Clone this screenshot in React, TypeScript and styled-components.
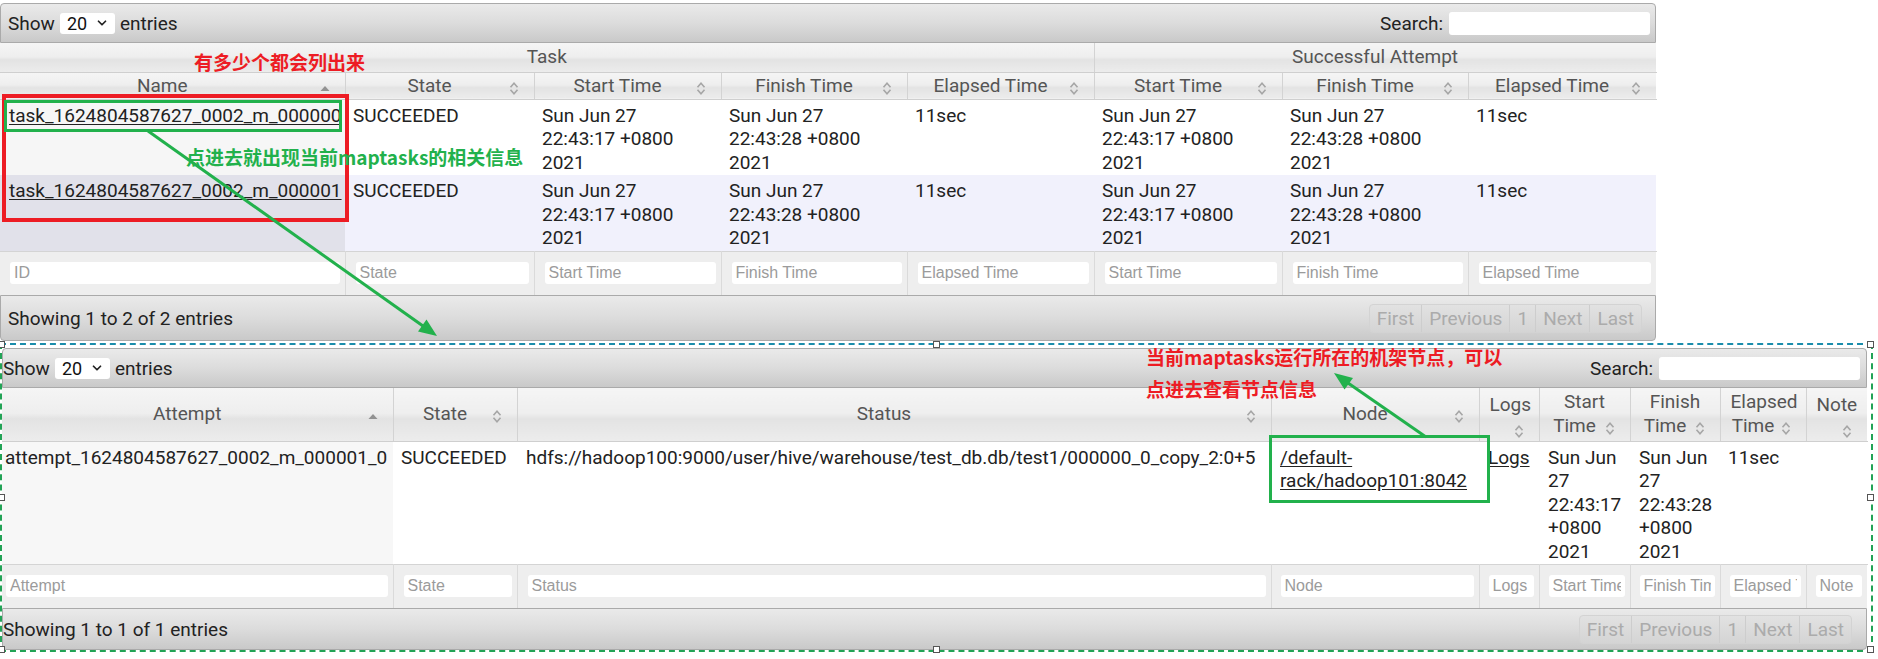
import React from 'react';
import styled, { createGlobalStyle } from 'styled-components';
import { ChevronDown } from 'lucide-react';

const GlobalStyle = createGlobalStyle`
  * { box-sizing: border-box; }
  html, body { margin: 0; padding: 0; background: #fff; }
  body {
    font-family: Roboto, "Liberation Sans", "Noto Sans CJK SC", sans-serif;
    font-size: 19px;
    color: #222;
    width: 1878px;
    height: 659px;
    overflow: hidden;
  }
`;

const Page = styled.div`
  position: relative;
  width: 1878px;
  height: 659px;
  padding-top: 3px;
`;

const Panel = styled.div<{ $width: number }>`
  width: ${(p) => p.$width}px;
`;

const Frame = styled.div`
  position: relative;
  margin-top: 2px;
  width: 1873px;
  height: 309px;
  padding-top: 3px;
  border: 2px dashed #22a356;
  border-top-color: #1a8cab;
`;

const Handle = styled.span<{ $x: number; $y: number }>`
  position: absolute;
  left: calc(${(p) => p.$x}% - 4px);
  top: calc(${(p) => p.$y}% - 4px);
  width: 7px;
  height: 7px;
  background: #fff;
  border: 1px solid #555;
`;

const Bar = styled.div<{ $padLeft: number; $padRight: number; $height: number; $top?: boolean }>`
  display: flex;
  align-items: center;
  justify-content: space-between;
  height: ${(p) => p.$height}px;
  padding: 0 ${(p) => p.$padRight}px 0 ${(p) => p.$padLeft}px;
  border: 1px solid #aaa;
  border-radius: ${(p) => (p.$top ? '4px 4px 0 0' : '0 0 4px 4px')};
  background: linear-gradient(#eaeaea 0%, #dcdcdc 50%, #c9c9c9 100%);
`;

const LengthBox = styled.label`
  display: flex;
  align-items: center;
  gap: 5px;
`;

const SelectWrap = styled.span`
  position: relative;
  display: inline-block;
`;

const Select = styled.select`
  appearance: none;
  width: 55px;
  height: 21px;
  padding: 0 0 0 7px;
  border: none;
  border-radius: 3px;
  background: #fff;
  font-family: Roboto, sans-serif;
  font-size: 18px;
  color: #111;
`;

const SelectArrow = styled.span`
  position: absolute;
  right: 6px;
  top: 4px;
  display: flex;
  pointer-events: none;
  color: #222;
`;

const SearchBox = styled.label`
  display: flex;
  align-items: center;
  gap: 6px;
`;

const SearchInput = styled.input`
  width: 201px;
  height: 23px;
  border: none;
  border-radius: 3px;
  background: #fff;
`;

const Table = styled.table<{ $width: number }>`
  width: ${(p) => p.$width}px;
  table-layout: fixed;
  border-collapse: collapse;
  border-spacing: 0;
`;

const HeadRow = styled.tr<{ $height: number }>`
  height: ${(p) => p.$height}px;
`;

const HeadCell = styled.th<{ $last?: boolean }>`
  padding: 0 10px;
  font-weight: 400;
  color: #555;
  line-height: 24px;
  text-align: center;
  vertical-align: middle;
  background: linear-gradient(#f5f5f5 0%, #eeeeee 48%, #e3e3e3 58%, #ececec 100%);
  border-right: 1px solid ${(p) => (p.$last ? 'transparent' : '#d3d3d3')};
  border-bottom: 1px solid #cfcfcf;
`;

const GroupCell = styled(HeadCell)`
  padding: 0;
`;

const SortIcon = styled.span`
  float: right;
  display: block;
  width: 10px;
  height: 15px;
  margin: 4px 5px 0 5px;
`;

const BodyRow = styled.tr<{ $height: number }>`
  height: ${(p) => p.$height}px;
`;

const BodyCell = styled.td<{ $bg: string; $padLeft?: number; $padRight?: number; $nowrap?: boolean }>`
  vertical-align: top;
  padding: 4px ${(p) => p.$padRight ?? 12}px 0 ${(p) => p.$padLeft ?? 8}px;
  line-height: 23.5px;
  background: ${(p) => p.$bg};
  white-space: ${(p) => (p.$nowrap ? 'nowrap' : 'normal')};
  overflow: visible;
`;

const CellLink = styled.a`
  color: #222;
  text-decoration: underline;
  text-underline-offset: 2px;
`;

const FilterCell = styled.td<{ $padLeft: number; $last?: boolean }>`
  height: 44px;
  padding: 0 5px 0 ${(p) => p.$padLeft}px;
  vertical-align: middle;
  background: #eeeeee;
  border-top: 1px solid #d4d4d4;
  border-right: 1px solid ${(p) => (p.$last ? 'transparent' : '#dadada')};
`;

const FilterInput = styled.input`
  display: block;
  width: 100%;
  height: 22px;
  padding: 0 4px;
  border: none;
  border-radius: 3px;
  background: #fff;
  font-family: "Liberation Sans", Arial, sans-serif;
  font-size: 16px;
  &::placeholder {
    color: #9b9b9b;
  }
`;

const Pager = styled.div`
  display: flex;
  height: 29px;
  border: 1px solid #d3d3d3;
  border-radius: 4px;
  background: linear-gradient(#e2e2e2, #d4d4d4);
  overflow: hidden;
`;

const PageBtn = styled.span`
  padding: 0 7px;
  line-height: 27px;
  color: #ababab;
  border-left: 1px solid #cdcdcd;
  &:first-child {
    border-left: none;
  }
`;

const Overlay = styled.svg`
  position: absolute;
  left: 0;
  top: 0;
  pointer-events: none;
`;

const MarkBox = styled.div<{ $color: string; $x: number; $y: number; $w: number; $h: number; $line: number }>`
  position: absolute;
  left: ${(p) => p.$x}px;
  top: ${(p) => p.$y}px;
  width: ${(p) => p.$w}px;
  height: ${(p) => p.$h}px;
  border: ${(p) => p.$line}px solid ${(p) => p.$color};
  pointer-events: none;
`;

const Note = styled.div<{ $color: string; $x: number; $y: number }>`
  position: absolute;
  left: ${(p) => p.$x}px;
  top: ${(p) => p.$y}px;
  font-family: "Noto Sans CJK SC", sans-serif;
  font-weight: 700;
  font-size: 19px;
  line-height: 1;
  color: ${(p) => p.$color};
  white-space: nowrap;
`;

const RED = '#ed1c24';
const GREEN = '#22b14c';

type Sort = 'asc' | 'both';
interface Col {
  label: string;
  width: number;
  sort: Sort;
  filter: string;
  filterPad: number;
}

const topCols: Col[] = [
  { label: 'Name', width: 345, sort: 'asc', filter: 'ID', filterPad: 10 },
  { label: 'State', width: 189, sort: 'both', filter: 'State', filterPad: 10 },
  { label: 'Start Time', width: 187, sort: 'both', filter: 'Start Time', filterPad: 10 },
  { label: 'Finish Time', width: 186, sort: 'both', filter: 'Finish Time', filterPad: 10 },
  { label: 'Elapsed Time', width: 187, sort: 'both', filter: 'Elapsed Time', filterPad: 10 },
  { label: 'Start Time', width: 188, sort: 'both', filter: 'Start Time', filterPad: 10 },
  { label: 'Finish Time', width: 186, sort: 'both', filter: 'Finish Time', filterPad: 10 },
  { label: 'Elapsed Time', width: 188, sort: 'both', filter: 'Elapsed Time', filterPad: 10 },
];

const bottomCols: Col[] = [
  { label: 'Attempt', width: 391, sort: 'asc', filter: 'Attempt', filterPad: 4 },
  { label: 'State', width: 124, sort: 'both', filter: 'State', filterPad: 10 },
  { label: 'Status', width: 754, sort: 'both', filter: 'Status', filterPad: 10 },
  { label: 'Node', width: 208, sort: 'both', filter: 'Node', filterPad: 9 },
  { label: 'Logs', width: 60, sort: 'both', filter: 'Logs', filterPad: 9 },
  { label: 'Start Time', width: 91, sort: 'both', filter: 'Start Time', filterPad: 9 },
  { label: 'Finish Time', width: 90, sort: 'both', filter: 'Finish Time', filterPad: 9 },
  { label: 'Elapsed Time', width: 86, sort: 'both', filter: 'Elapsed Time', filterPad: 9 },
  { label: 'Note', width: 61, sort: 'both', filter: 'Note', filterPad: 9 },
];

const START = 'Sun Jun 27 22:43:17 +0800 2021';
const FINISH = 'Sun Jun 27 22:43:28 +0800 2021';

const tasks = ['task_1624804587627_0002_m_000000', 'task_1624804587627_0002_m_000001'];

const SortGlyph = ({ sort }: { sort: Sort }) => (
  <SortIcon>
    {sort === 'asc' ? (
      <svg width="10" height="15" viewBox="0 0 10 15">
        <path d="M0.5 10 L5 5 L9.5 10 Z" fill="#929292" />
      </svg>
    ) : (
      <svg width="10" height="15" viewBox="0 0 10 15" fill="none">
        <path d="M1.5 6.2 L5 2.2 L8.5 6.2" stroke="#a6a6a6" strokeWidth="1.6" />
        <path d="M1.5 8.8 L5 12.8 L8.5 8.8" stroke="#a6a6a6" strokeWidth="1.6" />
      </svg>
    )}
  </SortIcon>
);

const LengthControl = () => (
  <LengthBox>
    Show
    <SelectWrap>
      <Select defaultValue="20">
        <option value="20">20</option>
        <option value="40">40</option>
        <option value="60">60</option>
      </Select>
      <SelectArrow>
        <ChevronDown size={14} strokeWidth={3} />
      </SelectArrow>
    </SelectWrap>
    entries
  </LengthBox>
);

const SearchControl = () => (
  <SearchBox>
    Search:
    <SearchInput type="text" />
  </SearchBox>
);

const Pagination = () => (
  <Pager>
    {['First', 'Previous', '1', 'Next', 'Last'].map((b) => (
      <PageBtn key={b}>{b}</PageBtn>
    ))}
  </Pager>
);

const ColumnHeads = ({ cols, height }: { cols: Col[]; height: number }) => (
  <HeadRow $height={height}>
    {cols.map((c, i) => (
      <HeadCell key={i} $last={i === cols.length - 1}>
        {c.label}
        <SortGlyph sort={c.sort} />
      </HeadCell>
    ))}
  </HeadRow>
);

const FilterRow = ({ cols }: { cols: Col[] }) => (
  <tr>
    {cols.map((c, i) => (
      <FilterCell key={i} $padLeft={c.filterPad} $last={i === cols.length - 1}>
        <FilterInput type="text" placeholder={c.filter} />
      </FilterCell>
    ))}
  </tr>
);

const TaskTable = () => (
  <Panel $width={1656}>
    <Bar $top $height={40} $padLeft={7} $padRight={5}>
      <LengthControl />
      <SearchControl />
    </Bar>
    <Table $width={1656}>
      <colgroup>
        {topCols.map((c, i) => (
          <col key={i} style={{ width: c.width }} />
        ))}
      </colgroup>
      <thead>
        <HeadRow $height={29}>
          <GroupCell colSpan={5}>Task</GroupCell>
          <GroupCell colSpan={3} $last>
            Successful Attempt
          </GroupCell>
        </HeadRow>
        <ColumnHeads cols={topCols} height={27} />
      </thead>
      <tbody>
        {tasks.map((t, r) => {
          const bg = r === 0 ? '#ffffff' : '#f1f1fc';
          const sortedBg = r === 0 ? '#f6f6f6' : '#e1e1ea';
          return (
            <BodyRow key={t} $height={76}>
              <BodyCell $bg={sortedBg} $padLeft={9} $padRight={2}>
                <CellLink href="#">{t}</CellLink>
              </BodyCell>
              <BodyCell $bg={bg}>SUCCEEDED</BodyCell>
              <BodyCell $bg={bg}>{START}</BodyCell>
              <BodyCell $bg={bg}>{FINISH}</BodyCell>
              <BodyCell $bg={bg}>11sec</BodyCell>
              <BodyCell $bg={bg}>{START}</BodyCell>
              <BodyCell $bg={bg}>{FINISH}</BodyCell>
              <BodyCell $bg={bg}>11sec</BodyCell>
            </BodyRow>
          );
        })}
        <FilterRow cols={topCols} />
      </tbody>
    </Table>
    <Bar $height={46} $padLeft={7} $padRight={13}>
      <span>Showing 1 to 2 of 2 entries</span>
      <Pagination />
    </Bar>
  </Panel>
);

const AttemptTable = () => (
  <Panel $width={1865}>
    <Bar $top $height={40} $padLeft={0} $padRight={6}>
      <LengthControl />
      <SearchControl />
    </Bar>
    <Table $width={1865}>
      <colgroup>
        {bottomCols.map((c, i) => (
          <col key={i} style={{ width: c.width }} />
        ))}
      </colgroup>
      <thead>
        <ColumnHeads cols={bottomCols} height={53} />
      </thead>
      <tbody>
        <BodyRow $height={123}>
          <BodyCell $bg="#f7f7f7" $padLeft={3} $padRight={2}>
            attempt_1624804587627_0002_m_000001_0
          </BodyCell>
          <BodyCell $bg="#fff">SUCCEEDED</BodyCell>
          <BodyCell $bg="#fff" $padLeft={9} $padRight={2} $nowrap>
            hdfs://hadoop100:9000/user/hive/warehouse/test_db.db/test1/000000_0_copy_2:0+5
          </BodyCell>
          <BodyCell $bg="#fff" $padLeft={9}>
            <CellLink href="#">/default-rack/hadoop101:8042</CellLink>
          </BodyCell>
          <BodyCell $bg="#fff" $padLeft={9} $padRight={2}>
            <CellLink href="#">Logs</CellLink>
          </BodyCell>
          <BodyCell $bg="#fff" $padLeft={9} $padRight={8}>
            {START}
          </BodyCell>
          <BodyCell $bg="#fff" $padLeft={9} $padRight={8}>
            {FINISH}
          </BodyCell>
          <BodyCell $bg="#fff" $padLeft={8}>
            11sec
          </BodyCell>
          <BodyCell $bg="#fff" />
        </BodyRow>
        <FilterRow cols={bottomCols} />
      </tbody>
    </Table>
    <Bar $height={42} $padLeft={0} $padRight={14}>
      <span>Showing 1 to 1 of 1 entries</span>
      <Pagination />
    </Bar>
  </Panel>
);

const handles: [number, number][] = [
  [0, 0],
  [50, 0],
  [100, 0],
  [0, 50],
  [100, 50],
  [0, 100],
  [50, 100],
  [100, 100],
];

const Arrows = () => (
  <Overlay width="1878" height="659" viewBox="0 0 1878 659">
    <line x1="148" y1="131" x2="423" y2="326" stroke={GREEN} strokeWidth="3" />
    <polygon points="437,336 418,331.5 426.5,319.5" fill={GREEN} />
    <line x1="1426" y1="437" x2="1348" y2="383" stroke={GREEN} strokeWidth="3" />
    <polygon points="1334,373 1353,378 1344.5,389.5" fill={GREEN} />
  </Overlay>
);

export default function App() {
  return (
    <>
      <GlobalStyle />
      <Page>
        <TaskTable />
        <Frame>
          <AttemptTable />
          {handles.map(([x, y]) => (
            <Handle key={`${x}-${y}`} $x={x} $y={y} />
          ))}
        </Frame>

        <MarkBox $color={RED} $x={2} $y={94} $w={347} $h={128} $line={4} />
        <MarkBox $color={GREEN} $x={4} $y={100} $w={338} $h={32} $line={3} />
        <MarkBox $color={GREEN} $x={1269} $y={435} $w={221} $h={68} $line={3} />

        <Note $color={RED} $x={194} $y={52}>
          有多少个都会列出来
        </Note>
        <Note $color={GREEN} $x={186} $y={147}>
          点进去就出现当前maptasks的相关信息
        </Note>
        <Note $color={RED} $x={1146} $y={347}>
          当前maptasks运行所在的机架节点，可以
        </Note>
        <Note $color={RED} $x={1146} $y={379}>
          点进去查看节点信息
        </Note>

        <Arrows />
      </Page>
    </>
  );
}
